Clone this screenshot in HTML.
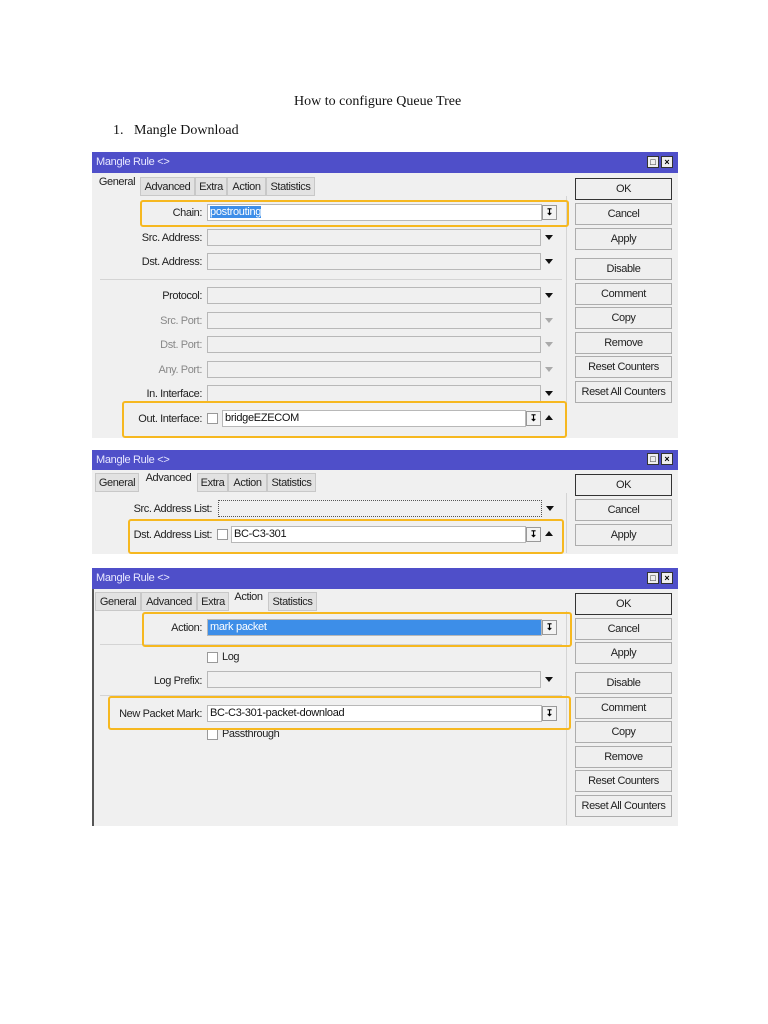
<!DOCTYPE html>
<html><head><meta charset="utf-8"><style>
*{margin:0;padding:0;box-sizing:border-box}
body{width:768px;height:1024px;background:#fff;position:relative;overflow:hidden;font-family:"Liberation Sans",sans-serif;}
.a{position:absolute}
.doc{font-family:"Liberation Serif",serif;font-size:14px;color:#111}
.pan{background:#f0f0f0}
.tb{background:#4f4fc9;color:#e8e8ff;font-size:11px;padding:4px 0 0 4px;letter-spacing:-0.3px}
.wb{width:12px;height:12px;border:1px solid #333;background:#eee;font-size:9px;text-align:center;line-height:10px;color:#000;font-weight:bold}
.tab{font-size:11px;color:#222;letter-spacing:-0.4px;background:#e2e2e2;border:1px solid #c8c8c8;height:19px;padding-top:3px;text-align:center}
.tab.on{background:#f0f0f0;border-bottom:none;height:21px;padding-top:1px}
.lbl{font-size:11px;color:#222;text-align:right;letter-spacing:-0.4px}
.g{color:#888}
.f{background:#f0f0f0;border:1px solid #b8b8b8;height:17px;font-size:11px;padding:1px 2px;letter-spacing:-0.3px;color:#111}
.w{background:#fff}
.ar{width:0;height:0;border-left:4px solid transparent;border-right:4px solid transparent;border-top:5px solid #111}
.ar.g2{border-top-color:#aaa}
.up{width:0;height:0;border-left:4px solid transparent;border-right:4px solid transparent;border-bottom:5px solid #111}
.dd{width:15px;height:15px;border:1px solid #999;background:#f3f3f3;font-size:9px;text-align:center;line-height:13px;font-weight:bold}
.btn{width:97px;height:22px;border:1px solid #adadad;background:#efefef;font-size:11px;text-align:center;line-height:20px;color:#222;letter-spacing:-0.4px}
.btn.ok{border:1px solid #333}
.ob{border:2.5px solid #f6b820;border-radius:3px}
.cb{width:11px;height:11px;border:1px solid #999;background:#fff}
.sel{background:#3d8ee8;color:#fff}
.hl{border-top:1px solid #d4d4d4}
.vl{border-left:1px solid #d4d4d4}
</style></head><body>
<div class="a doc" style="left:294px;top:94px">How to configure Queue Tree</div>
<div class="a doc" style="left:113px;top:123px">1.&nbsp;&nbsp;&nbsp;Mangle Download</div>

<!-- PANEL 1 -->
<div class="a pan" style="left:92px;top:152px;width:586px;height:286px"></div>
<div class="a tb" style="left:92px;top:152px;width:586px;height:21px">Mangle Rule &lt;&gt;</div>
<div class="a wb" style="left:647px;top:156px">□</div><div class="a wb" style="left:661px;top:156px">×</div>
<div class="a tab on" style="left:95px;top:175px;width:44px;border:none">General</div>
<div class="a tab" style="left:140px;top:177px;width:55px">Advanced</div>
<div class="a tab" style="left:195px;top:177px;width:32px">Extra</div>
<div class="a tab" style="left:227px;top:177px;width:39px">Action</div>
<div class="a tab" style="left:266px;top:177px;width:49px">Statistics</div>
<div class="a vl" style="left:566px;top:196px;height:240px"></div>

<div class="a lbl" style="left:100px;top:207px;width:102px">Chain:</div>
<div class="a f w" style="left:207px;top:204px;width:335px"><span class="sel">postrouting</span></div>
<div class="a dd" style="left:542px;top:205px">↧</div>
<div class="a lbl" style="left:100px;top:232px;width:102px">Src. Address:</div>
<div class="a f" style="left:207px;top:229px;width:334px"></div><div class="a ar" style="left:545px;top:235px"></div>
<div class="a lbl" style="left:100px;top:256px;width:102px">Dst. Address:</div>
<div class="a f" style="left:207px;top:253px;width:334px"></div><div class="a ar" style="left:545px;top:259px"></div>
<div class="a hl" style="left:100px;top:279px;width:462px"></div>
<div class="a lbl" style="left:100px;top:290px;width:102px">Protocol:</div>
<div class="a f" style="left:207px;top:287px;width:334px"></div><div class="a ar" style="left:545px;top:293px"></div>
<div class="a lbl g" style="left:100px;top:315px;width:102px">Src. Port:</div>
<div class="a f" style="left:207px;top:312px;width:334px"></div><div class="a ar g2" style="left:545px;top:318px"></div>
<div class="a lbl g" style="left:100px;top:339px;width:102px">Dst. Port:</div>
<div class="a f" style="left:207px;top:336px;width:334px"></div><div class="a ar g2" style="left:545px;top:342px"></div>
<div class="a lbl g" style="left:100px;top:364px;width:102px">Any. Port:</div>
<div class="a f" style="left:207px;top:361px;width:334px"></div><div class="a ar g2" style="left:545px;top:367px"></div>
<div class="a lbl" style="left:100px;top:388px;width:102px">In. Interface:</div>
<div class="a f" style="left:207px;top:385px;width:334px"></div><div class="a ar" style="left:545px;top:391px"></div>
<div class="a lbl" style="left:100px;top:413px;width:102px">Out. Interface:</div>
<div class="a cb" style="left:207px;top:413px"></div>
<div class="a f w" style="left:222px;top:410px;width:304px">bridgeEZECOM</div>
<div class="a dd" style="left:526px;top:411px">↧</div><div class="a up" style="left:545px;top:415px"></div>
<div class="a ob" style="left:140px;top:200px;width:429px;height:27px"></div>
<div class="a ob" style="left:122px;top:401px;width:445px;height:37px"></div>

<div class="a btn ok" style="left:575px;top:178px">OK</div>
<div class="a btn" style="left:575px;top:203px">Cancel</div>
<div class="a btn" style="left:575px;top:228px">Apply</div>
<div class="a btn" style="left:575px;top:258px">Disable</div>
<div class="a btn" style="left:575px;top:283px">Comment</div>
<div class="a btn" style="left:575px;top:307px">Copy</div>
<div class="a btn" style="left:575px;top:332px">Remove</div>
<div class="a btn" style="left:575px;top:356px">Reset Counters</div>
<div class="a btn" style="left:575px;top:381px">Reset All Counters</div>

<!-- PANEL 2 -->
<div class="a pan" style="left:92px;top:450px;width:586px;height:104px"></div>
<div class="a tb" style="left:92px;top:450px;width:586px;height:20px">Mangle Rule &lt;&gt;</div>
<div class="a wb" style="left:647px;top:453px">□</div><div class="a wb" style="left:661px;top:453px">×</div>
<div class="a tab" style="left:95px;top:473px;width:44px">General</div>
<div class="a tab on" style="left:140px;top:471px;width:57px;border:none">Advanced</div>
<div class="a tab" style="left:197px;top:473px;width:31px">Extra</div>
<div class="a tab" style="left:228px;top:473px;width:39px">Action</div>
<div class="a tab" style="left:267px;top:473px;width:49px">Statistics</div>
<div class="a vl" style="left:566px;top:493px;height:60px"></div>
<div class="a lbl" style="left:100px;top:503px;width:112px">Src. Address List:</div>
<div class="a f" style="left:218px;top:500px;width:324px;border:1px dotted #555"></div><div class="a ar" style="left:546px;top:506px"></div>
<div class="a lbl" style="left:100px;top:529px;width:112px">Dst. Address List:</div>
<div class="a cb" style="left:217px;top:529px"></div>
<div class="a f w" style="left:231px;top:526px;width:295px">BC-C3-301</div>
<div class="a dd" style="left:526px;top:527px">↧</div><div class="a up" style="left:545px;top:531px"></div>
<div class="a ob" style="left:128px;top:519px;width:436px;height:35px"></div>
<div class="a btn ok" style="left:575px;top:474px">OK</div>
<div class="a btn" style="left:575px;top:499px">Cancel</div>
<div class="a btn" style="left:575px;top:524px">Apply</div>

<!-- PANEL 3 -->
<div class="a pan" style="left:92px;top:568px;width:586px;height:258px;border-left:2px solid #555"></div>
<div class="a tb" style="left:92px;top:568px;width:586px;height:21px">Mangle Rule &lt;&gt;</div>
<div class="a wb" style="left:647px;top:572px">□</div><div class="a wb" style="left:661px;top:572px">×</div>
<div class="a tab" style="left:95px;top:592px;width:46px">General</div>
<div class="a tab" style="left:141px;top:592px;width:56px">Advanced</div>
<div class="a tab" style="left:197px;top:592px;width:32px">Extra</div>
<div class="a tab on" style="left:229px;top:590px;width:39px;border:none">Action</div>
<div class="a tab" style="left:268px;top:592px;width:49px">Statistics</div>
<div class="a vl" style="left:566px;top:611px;height:214px"></div>
<div class="a lbl" style="left:100px;top:622px;width:102px">Action:</div>
<div class="a f sel" style="left:207px;top:619px;width:335px">mark packet</div>
<div class="a dd" style="left:542px;top:620px">↧</div>
<div class="a hl" style="left:100px;top:644px;width:462px"></div>
<div class="a cb" style="left:207px;top:652px"></div>
<div class="a lbl" style="left:222px;top:651px;text-align:left">Log</div>
<div class="a lbl" style="left:100px;top:675px;width:102px">Log Prefix:</div>
<div class="a f" style="left:207px;top:671px;width:334px"></div><div class="a ar" style="left:545px;top:677px"></div>
<div class="a hl" style="left:100px;top:695px;width:462px"></div>
<div class="a lbl" style="left:100px;top:708px;width:102px">New Packet Mark:</div>
<div class="a f w" style="left:207px;top:705px;width:335px">BC-C3-301-packet-download</div>
<div class="a dd" style="left:542px;top:706px">↧</div>
<div class="a cb" style="left:207px;top:729px"></div>
<div class="a lbl" style="left:222px;top:728px;text-align:left">Passthrough</div>
<div class="a ob" style="left:142px;top:612px;width:430px;height:35px"></div>
<div class="a ob" style="left:108px;top:696px;width:463px;height:34px"></div>
<div class="a btn ok" style="left:575px;top:593px">OK</div>
<div class="a btn" style="left:575px;top:618px">Cancel</div>
<div class="a btn" style="left:575px;top:642px">Apply</div>
<div class="a btn" style="left:575px;top:672px">Disable</div>
<div class="a btn" style="left:575px;top:697px">Comment</div>
<div class="a btn" style="left:575px;top:721px">Copy</div>
<div class="a btn" style="left:575px;top:746px">Remove</div>
<div class="a btn" style="left:575px;top:770px">Reset Counters</div>
<div class="a btn" style="left:575px;top:795px">Reset All Counters</div>
</body></html>
